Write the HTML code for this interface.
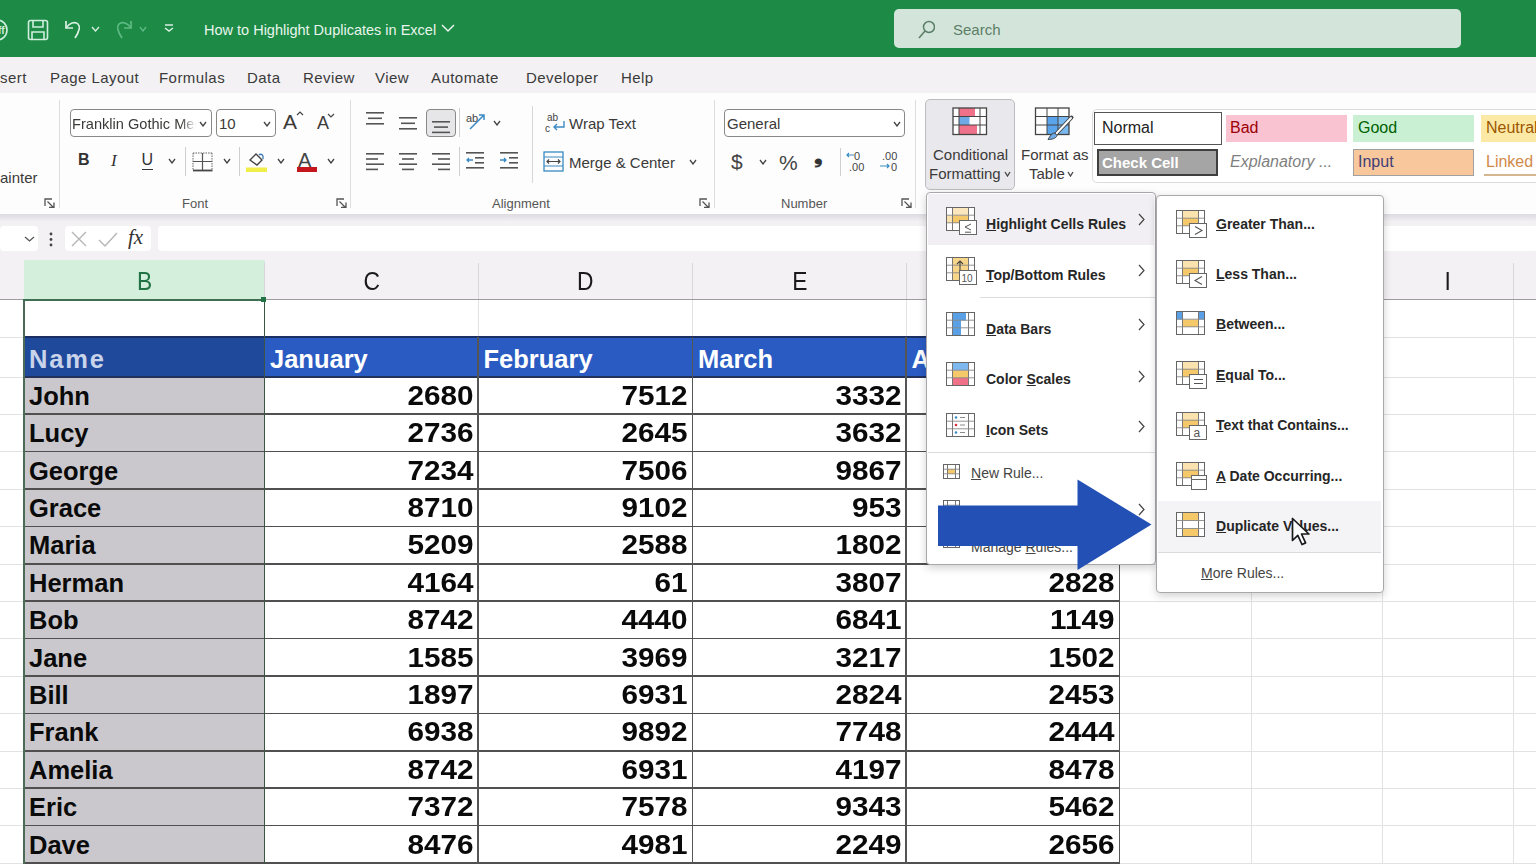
<!DOCTYPE html><html><head><meta charset="utf-8"><style>
*{margin:0;padding:0;box-sizing:border-box}
html,body{width:1536px;height:864px;overflow:hidden;background:#fff;font-family:"Liberation Sans",sans-serif}
.abs{position:absolute}
.t{position:absolute;white-space:nowrap;line-height:1}
</style></head><body>
<div class="abs" style="left:0;top:0;width:1536px;height:57px;background:#1d8b46"></div>
<div class="abs" style="left:894px;top:9px;width:567px;height:39px;background:#d3e5da;border-radius:5px"></div>
<div class="t" style="left:953px;top:22px;font-size:15px;color:#5c7e67">Search</div>
<div class="t" style="left:204px;top:23px;font-size:14.5px;color:#e8f5ec">How to Highlight Duplicates in Excel</div>
<div class="abs" style="left:0;top:57px;width:1536px;height:36px;background:#f3f1f4"></div>
<div class="t" style="left:0px;top:70px;font-size:15px;color:#3a3a3a;letter-spacing:0.45px">sert</div>
<div class="t" style="left:50px;top:70px;font-size:15px;color:#3a3a3a;letter-spacing:0.45px">Page Layout</div>
<div class="t" style="left:159px;top:70px;font-size:15px;color:#3a3a3a;letter-spacing:0.45px">Formulas</div>
<div class="t" style="left:247px;top:70px;font-size:15px;color:#3a3a3a;letter-spacing:0.45px">Data</div>
<div class="t" style="left:303px;top:70px;font-size:15px;color:#3a3a3a;letter-spacing:0.45px">Review</div>
<div class="t" style="left:375px;top:70px;font-size:15px;color:#3a3a3a;letter-spacing:0.45px">View</div>
<div class="t" style="left:431px;top:70px;font-size:15px;color:#3a3a3a;letter-spacing:0.45px">Automate</div>
<div class="t" style="left:526px;top:70px;font-size:15px;color:#3a3a3a;letter-spacing:0.45px">Developer</div>
<div class="t" style="left:621px;top:70px;font-size:15px;color:#3a3a3a;letter-spacing:0.45px">Help</div>
<div class="abs" style="left:0;top:93px;width:1536px;height:122px;background:#fdfdfd"></div>
<div class="abs" style="left:0;top:214px;width:1536px;height:8px;background:linear-gradient(#dddbe0,#f3f1f4)"></div>
<div class="t" style="left:0px;top:170px;font-size:15px;color:#3b3a39;">ainter</div>
<svg class="abs" style="left:44px;top:198px;" width="11" height="10" viewBox="0 0 11 10"><path d="M1 8V1h7M3.5 3.5l6 6M10 4.5v5H5" stroke="#555" stroke-width="1.3" fill="none"/></svg>
<div class="abs" style="left:58.5px;top:100px;width:1px;height:108px;background:#dedcdf"></div>
<div class="abs" style="left:69.5px;top:109px;width:142.5px;height:28px;border:1px solid #8a8886;border-radius:4px;background:#fff"></div>
<div class="t" style="left:72px;top:116.5px;width:124px;overflow:hidden;font-size:14.6px;color:#3b3a39;-webkit-mask-image:linear-gradient(90deg,#000 88%,transparent)">Franklin Gothic Medium</div>
<svg class="abs" style="left:199px;top:121px;" width="8" height="6" viewBox="0 0 8 6"><path d="M1 1l3.0 4l3.0 -4" stroke="#444" stroke-width="1.3" fill="none"/></svg>
<div class="abs" style="left:215.5px;top:109px;width:60px;height:28px;border:1px solid #8a8886;border-radius:4px;background:#fff"></div>
<div class="t" style="left:219px;top:116px;font-size:15px;color:#3b3a39;">10</div>
<svg class="abs" style="left:263px;top:121px;" width="8" height="6" viewBox="0 0 8 6"><path d="M1 1l3.0 4l3.0 -4" stroke="#444" stroke-width="1.3" fill="none"/></svg>
<div class="t" style="left:283px;top:111px;font-size:21px;color:#3b3a39;">A</div>
<svg class="abs" style="left:296px;top:110px;" width="8" height="6" viewBox="0 0 8 6"><path d="M1 5l3-3 3 3" stroke="#444" stroke-width="1.2" fill="none"/></svg>
<div class="t" style="left:317px;top:114px;font-size:18px;color:#3b3a39;">A</div>
<svg class="abs" style="left:327px;top:113px;" width="8" height="6" viewBox="0 0 8 6"><path d="M1 1l3 3 3-3" stroke="#444" stroke-width="1.2" fill="none"/></svg>
<div class="t" style="left:78px;top:152px;font-size:16px;color:#333;font-weight:bold">B</div>
<div class="t" style="left:111px;top:152px;font-size:17px;color:#333;font-style:italic;font-family:'Liberation Serif'">I</div>
<div class="t" style="left:141.5px;top:152px;font-size:16px;color:#333;">U</div>
<div class="abs" style="left:142px;top:168.5px;width:11px;height:1.2px;background:#333"></div>
<svg class="abs" style="left:168px;top:158px;" width="8" height="6" viewBox="0 0 8 6"><path d="M1 1l3.0 4l3.0 -4" stroke="#444" stroke-width="1.3" fill="none"/></svg>
<div class="abs" style="left:185px;top:147px;width:1px;height:29px;background:#d0ced2"></div>
<svg class="abs" style="left:192px;top:152px;" width="21" height="20" viewBox="0 0 21 20"><path d="M1 1h19M1 1v17M20 1v17" stroke="#666" stroke-width="1" fill="none" stroke-dasharray="1.5 1"/><path d="M10.5 1v17M1 9.5h19" stroke="#555" stroke-width="1.2"/><path d="M1 18.5h19.5" stroke="#444" stroke-width="1.8"/></svg>
<svg class="abs" style="left:222.5px;top:158px;" width="8" height="6" viewBox="0 0 8 6"><path d="M1 1l3.0 4l3.0 -4" stroke="#444" stroke-width="1.3" fill="none"/></svg>
<div class="abs" style="left:239px;top:147px;width:1px;height:29px;background:#d0ced2"></div>
<svg class="abs" style="left:245px;top:149px;" width="24" height="24" viewBox="0 0 24 24"><path d="M5 11l6-6 6 6-5 5z" stroke="#444" stroke-width="1.4" fill="none"/><path d="M14 6c2-2 5 0 4 4" stroke="#3a7ab8" stroke-width="1.4" fill="none"/><rect x="1" y="18.5" width="21" height="4.5" fill="#f1ee4a"/></svg>
<svg class="abs" style="left:276.5px;top:158px;" width="8" height="6" viewBox="0 0 8 6"><path d="M1 1l3.0 4l3.0 -4" stroke="#444" stroke-width="1.3" fill="none"/></svg>
<div class="t" style="left:298px;top:150px;font-size:20px;color:#444;">A</div>
<div class="abs" style="left:296.5px;top:166.5px;width:20px;height:5px;background:#c4161c"></div>
<svg class="abs" style="left:327px;top:158px;" width="8" height="6" viewBox="0 0 8 6"><path d="M1 1l3.0 4l3.0 -4" stroke="#444" stroke-width="1.3" fill="none"/></svg>
<div class="t" style="left:182px;top:197px;font-size:13px;color:#555;">Font</div>
<svg class="abs" style="left:335.5px;top:198px;" width="11" height="10" viewBox="0 0 11 10"><path d="M1 8V1h7M3.5 3.5l6 6M10 4.5v5H5" stroke="#555" stroke-width="1.3" fill="none"/></svg>
<div class="abs" style="left:349.5px;top:100px;width:1px;height:108px;background:#dedcdf"></div>
<svg class="abs" style="left:366px;top:112px;" width="20" height="18.5" viewBox="0 0 20 18.5"><rect x="0" y="0.0" width="18" height="1.6" fill="#555"/><rect x="2" y="5.5" width="14" height="1.6" fill="#555"/><rect x="0" y="11.0" width="18" height="1.6" fill="#555"/></svg>
<svg class="abs" style="left:399px;top:117px;" width="20" height="18.5" viewBox="0 0 20 18.5"><rect x="0" y="0.0" width="18" height="1.6" fill="#555"/><rect x="2" y="5.5" width="14" height="1.6" fill="#555"/><rect x="0" y="11.0" width="18" height="1.6" fill="#555"/></svg>
<div class="abs" style="left:425.5px;top:108.5px;width:30.5px;height:28.5px;border:1px solid #8a8886;border-radius:4px;background:#e6e5e8"></div>
<svg class="abs" style="left:432px;top:121px;" width="20" height="17.9" viewBox="0 0 20 17.9"><rect x="0" y="0.0" width="18" height="1.6" fill="#555"/><rect x="2" y="5.3" width="14" height="1.6" fill="#555"/><rect x="0" y="10.6" width="18" height="1.6" fill="#555"/></svg>
<div class="abs" style="left:459px;top:108px;width:1px;height:29px;background:#d0ced2"></div>
<svg class="abs" style="left:465px;top:110px;" width="24" height="22" viewBox="0 0 24 22"><text x="1" y="12" font-size="11" fill="#444" font-family="Liberation Sans">ab</text><path d="M5 19L19 5M14 5h5v5" stroke="#3a8bc4" stroke-width="1.5" fill="none"/></svg>
<svg class="abs" style="left:493px;top:120px;" width="8" height="6" viewBox="0 0 8 6"><path d="M1 1l3.0 4l3.0 -4" stroke="#444" stroke-width="1.3" fill="none"/></svg>
<div class="abs" style="left:532px;top:106px;width:1px;height:77px;background:#d8d6da"></div>
<svg class="abs" style="left:545px;top:112px;" width="22" height="22" viewBox="0 0 22 22"><text x="2" y="9" font-size="10" fill="#444" font-family="Liberation Sans">ab</text><text x="0" y="20" font-size="10" fill="#444" font-family="Liberation Sans">c</text><path d="M19 9v6h-9M12 12l-3 3 3 3" stroke="#3a8bc4" stroke-width="1.4" fill="none"/></svg>
<div class="t" style="left:569px;top:116px;font-size:15px;color:#3b3a39;">Wrap Text</div>
<svg class="abs" style="left:366px;top:153px;" width="20" height="22.8" viewBox="0 0 20 22.8"><rect x="0" y="0.0" width="18" height="1.6" fill="#555"/><rect x="0" y="5.2" width="12" height="1.6" fill="#555"/><rect x="0" y="10.4" width="18" height="1.6" fill="#555"/><rect x="0" y="15.600000000000001" width="12" height="1.6" fill="#555"/></svg>
<svg class="abs" style="left:399px;top:153px;" width="20" height="22.8" viewBox="0 0 20 22.8"><rect x="0" y="0.0" width="18" height="1.6" fill="#555"/><rect x="3" y="5.2" width="12" height="1.6" fill="#555"/><rect x="0" y="10.4" width="18" height="1.6" fill="#555"/><rect x="3" y="15.600000000000001" width="12" height="1.6" fill="#555"/></svg>
<svg class="abs" style="left:431.5px;top:153px;" width="20" height="22.8" viewBox="0 0 20 22.8"><rect x="0" y="0.0" width="18" height="1.6" fill="#555"/><rect x="6" y="5.2" width="12" height="1.6" fill="#555"/><rect x="0" y="10.4" width="18" height="1.6" fill="#555"/><rect x="6" y="15.600000000000001" width="12" height="1.6" fill="#555"/></svg>
<div class="abs" style="left:459px;top:147px;width:1px;height:29px;background:#d0ced2"></div>
<svg class="abs" style="left:466px;top:152px;" width="20" height="18" viewBox="0 0 20 18"><rect x="0" y="0" width="18" height="1.6" fill="#555"/><rect x="9" y="5" width="9" height="1.6" fill="#555"/><rect x="9" y="10" width="9" height="1.6" fill="#555"/><rect x="0" y="15" width="18" height="1.6" fill="#555"/><path d="M7 8H1M3 6l-2 2 2 2" stroke="#3a8bc4" stroke-width="1.3" fill="none"/></svg>
<svg class="abs" style="left:499.5px;top:152px;" width="20" height="18" viewBox="0 0 20 18"><rect x="0" y="0" width="18" height="1.6" fill="#555"/><rect x="9" y="5" width="9" height="1.6" fill="#555"/><rect x="9" y="10" width="9" height="1.6" fill="#555"/><rect x="0" y="15" width="18" height="1.6" fill="#555"/><path d="M0 8h6M4 6l2 2-2 2" stroke="#3a8bc4" stroke-width="1.3" fill="none"/></svg>
<svg class="abs" style="left:543px;top:151px;" width="21" height="21" viewBox="0 0 21 21"><rect x="1" y="1" width="19" height="19" fill="none" stroke="#3a8bc4" stroke-width="1.3"/><path d="M1 6h19M1 15h19" stroke="#3a8bc4" stroke-width="1"/><path d="M4 10.5h13M6 8.5l-2 2 2 2M15 8.5l2 2-2 2" stroke="#444" stroke-width="1.2" fill="none"/></svg>
<div class="t" style="left:569px;top:155px;font-size:15px;color:#3b3a39;">Merge &amp; Center</div>
<svg class="abs" style="left:689px;top:159px;" width="8" height="6" viewBox="0 0 8 6"><path d="M1 1l3.0 4l3.0 -4" stroke="#444" stroke-width="1.3" fill="none"/></svg>
<div class="t" style="left:492px;top:197px;font-size:13px;color:#555;">Alignment</div>
<svg class="abs" style="left:699px;top:198px;" width="11" height="10" viewBox="0 0 11 10"><path d="M1 8V1h7M3.5 3.5l6 6M10 4.5v5H5" stroke="#555" stroke-width="1.3" fill="none"/></svg>
<div class="abs" style="left:713.5px;top:100px;width:1px;height:108px;background:#dedcdf"></div>
<div class="abs" style="left:724px;top:108.5px;width:181px;height:28.5px;border:1px solid #8a8886;border-radius:4px;background:#fff"></div>
<div class="t" style="left:727px;top:116px;font-size:15px;color:#3b3a39;">General</div>
<svg class="abs" style="left:893px;top:121px;" width="8" height="6" viewBox="0 0 8 6"><path d="M1 1l3.0 4l3.0 -4" stroke="#444" stroke-width="1.3" fill="none"/></svg>
<div class="t" style="left:731px;top:151px;font-size:21px;color:#444;">$</div>
<svg class="abs" style="left:758.5px;top:159px;" width="8" height="6" viewBox="0 0 8 6"><path d="M1 1l3.0 4l3.0 -4" stroke="#444" stroke-width="1.3" fill="none"/></svg>
<div class="t" style="left:779px;top:152px;font-size:21px;color:#444;">%</div>
<div class="t" style="left:814px;top:145px;font-size:22px;color:#333;font-weight:bold">&#x275F;</div>
<div class="abs" style="left:840px;top:148px;width:1px;height:28px;background:#d0ced2"></div>
<svg class="abs" style="left:846px;top:150px;" width="22" height="24" viewBox="0 0 22 24"><text x="8" y="10" font-size="11" fill="#444" font-family="Liberation Sans">0</text><text x="3" y="21" font-size="11" fill="#444" font-family="Liberation Sans">.00</text><path d="M8 5H1M3 3l-2 2 2 2" stroke="#3a8bc4" stroke-width="1.2" fill="none"/></svg>
<svg class="abs" style="left:879px;top:150px;" width="22" height="24" viewBox="0 0 22 24"><text x="3" y="10" font-size="11" fill="#444" font-family="Liberation Sans">.00</text><text x="12" y="21" font-size="11" fill="#444" font-family="Liberation Sans">0</text><path d="M1 16h9M8 14l2 2-2 2" stroke="#3a8bc4" stroke-width="1.2" fill="none"/></svg>
<div class="t" style="left:781px;top:197px;font-size:13px;color:#555;">Number</div>
<svg class="abs" style="left:900.5px;top:198px;" width="11" height="10" viewBox="0 0 11 10"><path d="M1 8V1h7M3.5 3.5l6 6M10 4.5v5H5" stroke="#555" stroke-width="1.3" fill="none"/></svg>
<div class="abs" style="left:915px;top:100px;width:1px;height:108px;background:#dedcdf"></div>
<div class="abs" style="left:925px;top:99px;width:90px;height:91px;border:1px solid #bdbbbf;border-radius:5px;background:#e9e8ec"></div>
<svg class="abs" style="left:952px;top:107px;" width="37" height="30" viewBox="0 0 37 30"><rect x="1" y="1" width="33.5" height="26.5" fill="#fff"/><rect x="7" y="1" width="16" height="8.5" fill="#f0728a"/><rect x="7" y="9.5" width="10.5" height="8.5" fill="#6ea9e8"/><rect x="7" y="18" width="18" height="9" fill="#f0728a"/><path d="M7 1v26.5M28 1v26.5M1 9.5h33.5M1 18h33.5" stroke="#444" stroke-width="1"/><rect x="1" y="1" width="33.5" height="26.5" fill="none" stroke="#444" stroke-width="1.3"/></svg>
<div class="t" style="left:933px;top:147px;font-size:15px;color:#3b3a39;">Conditional</div>
<div class="t" style="left:929px;top:166px;font-size:15px;color:#3b3a39;">Formatting</div>
<svg class="abs" style="left:1004px;top:171px;" width="7" height="6" viewBox="0 0 7 6"><path d="M1 1l2.5 4l2.5 -4" stroke="#444" stroke-width="1.3" fill="none"/></svg>
<svg class="abs" style="left:1034px;top:107px;" width="42" height="34" viewBox="0 0 42 34"><rect x="1.5" y="1" width="33.5" height="26.5" fill="#fff"/><rect x="13" y="9.5" width="22" height="18" fill="#7ab8f0"/><rect x="13" y="9.5" width="11" height="18" fill="#5aa4ec"/><path d="M13 1v26.5M24 1v26.5M1.5 9.5h33.5M1.5 18h33.5" stroke="#444" stroke-width="1"/><rect x="1.5" y="1" width="33.5" height="26.5" fill="none" stroke="#444" stroke-width="1.3"/><path d="M37.5 10.5L22 27" stroke="#444" stroke-width="4" stroke-linecap="round"/><path d="M37 11L21.5 27.5" stroke="#fff" stroke-width="2" stroke-linecap="round"/><path d="M21 26c-3 0-5 3-7 6.5 4 0 8-1 9-4z" fill="#6ea9e8" stroke="#444" stroke-width="1"/></svg>
<div class="t" style="left:1021px;top:147px;font-size:15px;color:#3b3a39;">Format as</div>
<div class="t" style="left:1029px;top:166px;font-size:15px;color:#3b3a39;">Table</div>
<svg class="abs" style="left:1067px;top:171px;" width="7" height="6" viewBox="0 0 7 6"><path d="M1 1l2.5 4l2.5 -4" stroke="#444" stroke-width="1.3" fill="none"/></svg>
<div class="abs" style="left:1091.5px;top:109px;width:460px;height:74px;border:1px solid #dcdadd;border-radius:5px;background:#fff"></div>
<div class="abs" style="left:1094px;top:112px;width:128px;height:33px;border:1.5px solid #555;background:#fff"></div>
<div class="t" style="left:1102px;top:120px;font-size:16px;color:#222;">Normal</div>
<div class="abs" style="left:1225.5px;top:115px;width:121px;height:27px;background:#f9c3d2"></div>
<div class="t" style="left:1230px;top:120px;font-size:16px;color:#9c0006;">Bad</div>
<div class="abs" style="left:1353px;top:115px;width:121px;height:27px;background:#c9f0d3"></div>
<div class="t" style="left:1358px;top:120px;font-size:16px;color:#006100;">Good</div>
<div class="abs" style="left:1481px;top:115px;width:80px;height:27px;background:#fde9a6"></div>
<div class="t" style="left:1486px;top:120px;font-size:16px;color:#9c5700;">Neutral</div>
<div class="abs" style="left:1097px;top:149px;width:121px;height:27px;background:#a5a5a5;border:2.5px double #3f3f3f;outline:1px solid #3f3f3f;outline-offset:-1px"></div>
<div class="t" style="left:1102px;top:154.5px;font-size:15px;color:#fff;font-weight:bold">Check Cell</div>
<div class="t" style="left:1230px;top:154px;font-size:16px;color:#7f7f7f;font-style:italic">Explanatory ...</div>
<div class="abs" style="left:1353px;top:149px;width:121px;height:27px;background:#f8c79c;border:1px solid #a0a0a0"></div>
<div class="t" style="left:1358px;top:154px;font-size:16px;color:#3f3f76;">Input</div>
<div class="t" style="left:1486px;top:154px;font-size:16px;color:#d18a48;">Linked</div>
<div class="abs" style="left:1484px;top:174px;width:60px;height:2px;background:#d6b690"></div>
<div class="abs" style="left:0;top:222px;width:1536px;height:38px;background:#f3f1f4"></div>
<div class="abs" style="left:0;top:226px;width:38px;height:25px;background:#fff;border-radius:4px"></div>
<div class="abs" style="left:65px;top:226px;width:86px;height:25px;background:#fff;border-radius:4px"></div>
<div class="abs" style="left:158px;top:226px;width:1380px;height:25px;background:#fff;border-radius:4px"></div>
<div class="abs" style="left:0;top:257px;width:1536px;height:42.5px;background:#f3f1f4"></div>
<div class="abs" style="left:23.5px;top:259.5px;width:241px;height:40.0px;background:#d4f0dc"></div>
<div class="t" style="left:23.5px;width:241.0px;text-align:center;top:267.5px;font-size:26.5px;color:#217346;transform:scaleX(0.86)">B</div>
<div class="abs" style="left:264.0px;top:263px;width:1px;height:36.5px;background:#d8d6da"></div>
<div class="t" style="left:264.5px;width:213.5px;text-align:center;top:267.5px;font-size:26.5px;color:#1a1a1a;transform:scaleX(0.86)">C</div>
<div class="abs" style="left:477.5px;top:263px;width:1px;height:36.5px;background:#d8d6da"></div>
<div class="t" style="left:478px;width:214.5px;text-align:center;top:267.5px;font-size:26.5px;color:#1a1a1a;transform:scaleX(0.86)">D</div>
<div class="abs" style="left:692.0px;top:263px;width:1px;height:36.5px;background:#d8d6da"></div>
<div class="t" style="left:692.5px;width:213.5px;text-align:center;top:267.5px;font-size:26.5px;color:#1a1a1a;transform:scaleX(0.86)">E</div>
<div class="abs" style="left:905.5px;top:263px;width:1px;height:36.5px;background:#d8d6da"></div>
<div class="t" style="left:906px;width:213.5px;text-align:center;top:267.5px;font-size:26.5px;color:#1a1a1a;transform:scaleX(0.86)">F</div>
<div class="abs" style="left:1119.0px;top:263px;width:1px;height:36.5px;background:#d8d6da"></div>
<div class="t" style="left:1119.5px;width:131.79999999999995px;text-align:center;top:267.5px;font-size:26.5px;color:#1a1a1a;transform:scaleX(0.86)">G</div>
<div class="abs" style="left:1250.8px;top:263px;width:1px;height:36.5px;background:#d8d6da"></div>
<div class="t" style="left:1251.3px;width:131.10000000000014px;text-align:center;top:267.5px;font-size:26.5px;color:#1a1a1a;transform:scaleX(0.86)">H</div>
<div class="abs" style="left:1381.9px;top:263px;width:1px;height:36.5px;background:#d8d6da"></div>
<div class="t" style="left:1382.4px;width:131.19999999999982px;text-align:center;top:267.5px;font-size:26.5px;color:#1a1a1a;transform:scaleX(0.86)">I</div>
<div class="abs" style="left:1513.1px;top:263px;width:1px;height:36.5px;background:#d8d6da"></div>
<div class="t" style="left:1513.6px;width:131.4000000000001px;text-align:center;top:267.5px;font-size:26.5px;color:#1a1a1a;transform:scaleX(0.86)">J</div>
<div class="abs" style="left:1644.5px;top:263px;width:1px;height:36.5px;background:#d8d6da"></div>
<div class="abs" style="left:0;top:298.5px;width:1536px;height:1.5px;background:#9d9b9f"></div>
<div class="abs" style="left:0;top:336.5px;width:1536px;height:1px;background:#e2e2e2"></div>
<div class="abs" style="left:0;top:376.5px;width:1536px;height:1px;background:#e2e2e2"></div>
<div class="abs" style="left:0;top:413.9px;width:1536px;height:1px;background:#e2e2e2"></div>
<div class="abs" style="left:0;top:451.29999999999995px;width:1536px;height:1px;background:#e2e2e2"></div>
<div class="abs" style="left:0;top:488.69999999999993px;width:1536px;height:1px;background:#e2e2e2"></div>
<div class="abs" style="left:0;top:526.0999999999999px;width:1536px;height:1px;background:#e2e2e2"></div>
<div class="abs" style="left:0;top:563.4999999999999px;width:1536px;height:1px;background:#e2e2e2"></div>
<div class="abs" style="left:0;top:600.8999999999999px;width:1536px;height:1px;background:#e2e2e2"></div>
<div class="abs" style="left:0;top:638.2999999999998px;width:1536px;height:1px;background:#e2e2e2"></div>
<div class="abs" style="left:0;top:675.6999999999998px;width:1536px;height:1px;background:#e2e2e2"></div>
<div class="abs" style="left:0;top:713.0999999999998px;width:1536px;height:1px;background:#e2e2e2"></div>
<div class="abs" style="left:0;top:750.4999999999998px;width:1536px;height:1px;background:#e2e2e2"></div>
<div class="abs" style="left:0;top:787.8999999999997px;width:1536px;height:1px;background:#e2e2e2"></div>
<div class="abs" style="left:0;top:825.2999999999997px;width:1536px;height:1px;background:#e2e2e2"></div>
<div class="abs" style="left:0;top:862.6999999999997px;width:1536px;height:1px;background:#e2e2e2"></div>
<div class="abs" style="left:23.0px;top:299.5px;width:1px;height:564.5px;background:#e2e2e2"></div>
<div class="abs" style="left:264.0px;top:299.5px;width:1px;height:564.5px;background:#e2e2e2"></div>
<div class="abs" style="left:477.5px;top:299.5px;width:1px;height:564.5px;background:#e2e2e2"></div>
<div class="abs" style="left:692.0px;top:299.5px;width:1px;height:564.5px;background:#e2e2e2"></div>
<div class="abs" style="left:905.5px;top:299.5px;width:1px;height:564.5px;background:#e2e2e2"></div>
<div class="abs" style="left:1119.0px;top:299.5px;width:1px;height:564.5px;background:#e2e2e2"></div>
<div class="abs" style="left:1250.8px;top:299.5px;width:1px;height:564.5px;background:#e2e2e2"></div>
<div class="abs" style="left:1381.9px;top:299.5px;width:1px;height:564.5px;background:#e2e2e2"></div>
<div class="abs" style="left:1513.1px;top:299.5px;width:1px;height:564.5px;background:#e2e2e2"></div>
<div class="abs" style="left:1644.5px;top:299.5px;width:1px;height:564.5px;background:#e2e2e2"></div>
<div class="abs" style="left:23.5px;top:337px;width:241px;height:40px;background:#1f4a9c"></div>
<div class="abs" style="left:264.5px;top:337px;width:855.0px;height:40px;background:#2a5bc2"></div>
<div class="t" style="left:29.0px;top:346.5px;font-size:25.5px;font-weight:bold;color:#c9d3ea;letter-spacing:1.8px;">Name</div>
<div class="t" style="left:270.0px;top:346.5px;font-size:25.5px;font-weight:bold;color:#ffffff;">January</div>
<div class="t" style="left:483.5px;top:346.5px;font-size:25.5px;font-weight:bold;color:#ffffff;">February</div>
<div class="t" style="left:698.0px;top:346.5px;font-size:25.5px;font-weight:bold;color:#ffffff;">March</div>
<div class="t" style="left:911.5px;top:346.5px;font-size:25.5px;font-weight:bold;color:#ffffff;">April</div>
<div class="abs" style="left:23.5px;top:377px;width:241px;height:37.39999999999998px;background:#cac8cc"></div>
<div class="abs" style="left:264.5px;top:377px;width:855px;height:37.39999999999998px;background:#fff"></div>
<div class="t" style="left:29px;top:383.8px;font-size:25.5px;font-weight:bold;color:#0a0a0a">John</div>
<div class="t" style="left:264.5px;width:208.5px;text-align:right;top:382.7px;font-size:27px;font-weight:bold;color:#0a0a0a;transform:scaleX(1.1);transform-origin:right">2680</div>
<div class="t" style="left:478px;width:209.5px;text-align:right;top:382.7px;font-size:27px;font-weight:bold;color:#0a0a0a;transform:scaleX(1.1);transform-origin:right">7512</div>
<div class="t" style="left:692.5px;width:208.5px;text-align:right;top:382.7px;font-size:27px;font-weight:bold;color:#0a0a0a;transform:scaleX(1.1);transform-origin:right">3332</div>
<div class="abs" style="left:23.5px;top:414.4px;width:241px;height:37.39999999999998px;background:#cac8cc"></div>
<div class="abs" style="left:264.5px;top:414.4px;width:855px;height:37.39999999999998px;background:#fff"></div>
<div class="t" style="left:29px;top:421.2px;font-size:25.5px;font-weight:bold;color:#0a0a0a">Lucy</div>
<div class="t" style="left:264.5px;width:208.5px;text-align:right;top:420.09999999999997px;font-size:27px;font-weight:bold;color:#0a0a0a;transform:scaleX(1.1);transform-origin:right">2736</div>
<div class="t" style="left:478px;width:209.5px;text-align:right;top:420.09999999999997px;font-size:27px;font-weight:bold;color:#0a0a0a;transform:scaleX(1.1);transform-origin:right">2645</div>
<div class="t" style="left:692.5px;width:208.5px;text-align:right;top:420.09999999999997px;font-size:27px;font-weight:bold;color:#0a0a0a;transform:scaleX(1.1);transform-origin:right">3632</div>
<div class="abs" style="left:23.5px;top:451.79999999999995px;width:241px;height:37.39999999999998px;background:#cac8cc"></div>
<div class="abs" style="left:264.5px;top:451.79999999999995px;width:855px;height:37.39999999999998px;background:#fff"></div>
<div class="t" style="left:29px;top:458.59999999999997px;font-size:25.5px;font-weight:bold;color:#0a0a0a">George</div>
<div class="t" style="left:264.5px;width:208.5px;text-align:right;top:457.49999999999994px;font-size:27px;font-weight:bold;color:#0a0a0a;transform:scaleX(1.1);transform-origin:right">7234</div>
<div class="t" style="left:478px;width:209.5px;text-align:right;top:457.49999999999994px;font-size:27px;font-weight:bold;color:#0a0a0a;transform:scaleX(1.1);transform-origin:right">7506</div>
<div class="t" style="left:692.5px;width:208.5px;text-align:right;top:457.49999999999994px;font-size:27px;font-weight:bold;color:#0a0a0a;transform:scaleX(1.1);transform-origin:right">9867</div>
<div class="abs" style="left:23.5px;top:489.19999999999993px;width:241px;height:37.39999999999998px;background:#cac8cc"></div>
<div class="abs" style="left:264.5px;top:489.19999999999993px;width:855px;height:37.39999999999998px;background:#fff"></div>
<div class="t" style="left:29px;top:495.99999999999994px;font-size:25.5px;font-weight:bold;color:#0a0a0a">Grace</div>
<div class="t" style="left:264.5px;width:208.5px;text-align:right;top:494.8999999999999px;font-size:27px;font-weight:bold;color:#0a0a0a;transform:scaleX(1.1);transform-origin:right">8710</div>
<div class="t" style="left:478px;width:209.5px;text-align:right;top:494.8999999999999px;font-size:27px;font-weight:bold;color:#0a0a0a;transform:scaleX(1.1);transform-origin:right">9102</div>
<div class="t" style="left:692.5px;width:208.5px;text-align:right;top:494.8999999999999px;font-size:27px;font-weight:bold;color:#0a0a0a;transform:scaleX(1.1);transform-origin:right">953</div>
<div class="abs" style="left:23.5px;top:526.5999999999999px;width:241px;height:37.39999999999998px;background:#cac8cc"></div>
<div class="abs" style="left:264.5px;top:526.5999999999999px;width:855px;height:37.39999999999998px;background:#fff"></div>
<div class="t" style="left:29px;top:533.3999999999999px;font-size:25.5px;font-weight:bold;color:#0a0a0a">Maria</div>
<div class="t" style="left:264.5px;width:208.5px;text-align:right;top:532.3px;font-size:27px;font-weight:bold;color:#0a0a0a;transform:scaleX(1.1);transform-origin:right">5209</div>
<div class="t" style="left:478px;width:209.5px;text-align:right;top:532.3px;font-size:27px;font-weight:bold;color:#0a0a0a;transform:scaleX(1.1);transform-origin:right">2588</div>
<div class="t" style="left:692.5px;width:208.5px;text-align:right;top:532.3px;font-size:27px;font-weight:bold;color:#0a0a0a;transform:scaleX(1.1);transform-origin:right">1802</div>
<div class="abs" style="left:23.5px;top:563.9999999999999px;width:241px;height:37.39999999999998px;background:#cac8cc"></div>
<div class="abs" style="left:264.5px;top:563.9999999999999px;width:855px;height:37.39999999999998px;background:#fff"></div>
<div class="t" style="left:29px;top:570.7999999999998px;font-size:25.5px;font-weight:bold;color:#0a0a0a">Herman</div>
<div class="t" style="left:264.5px;width:208.5px;text-align:right;top:569.6999999999999px;font-size:27px;font-weight:bold;color:#0a0a0a;transform:scaleX(1.1);transform-origin:right">4164</div>
<div class="t" style="left:478px;width:209.5px;text-align:right;top:569.6999999999999px;font-size:27px;font-weight:bold;color:#0a0a0a;transform:scaleX(1.1);transform-origin:right">61</div>
<div class="t" style="left:692.5px;width:208.5px;text-align:right;top:569.6999999999999px;font-size:27px;font-weight:bold;color:#0a0a0a;transform:scaleX(1.1);transform-origin:right">3807</div>
<div class="t" style="left:906px;width:208.5px;text-align:right;top:569.6999999999999px;font-size:27px;font-weight:bold;color:#0a0a0a;transform:scaleX(1.1);transform-origin:right">2828</div>
<div class="abs" style="left:23.5px;top:601.3999999999999px;width:241px;height:37.39999999999998px;background:#cac8cc"></div>
<div class="abs" style="left:264.5px;top:601.3999999999999px;width:855px;height:37.39999999999998px;background:#fff"></div>
<div class="t" style="left:29px;top:608.1999999999998px;font-size:25.5px;font-weight:bold;color:#0a0a0a">Bob</div>
<div class="t" style="left:264.5px;width:208.5px;text-align:right;top:607.0999999999999px;font-size:27px;font-weight:bold;color:#0a0a0a;transform:scaleX(1.1);transform-origin:right">8742</div>
<div class="t" style="left:478px;width:209.5px;text-align:right;top:607.0999999999999px;font-size:27px;font-weight:bold;color:#0a0a0a;transform:scaleX(1.1);transform-origin:right">4440</div>
<div class="t" style="left:692.5px;width:208.5px;text-align:right;top:607.0999999999999px;font-size:27px;font-weight:bold;color:#0a0a0a;transform:scaleX(1.1);transform-origin:right">6841</div>
<div class="t" style="left:906px;width:208.5px;text-align:right;top:607.0999999999999px;font-size:27px;font-weight:bold;color:#0a0a0a;transform:scaleX(1.1);transform-origin:right">1149</div>
<div class="abs" style="left:23.5px;top:638.7999999999998px;width:241px;height:37.39999999999998px;background:#cac8cc"></div>
<div class="abs" style="left:264.5px;top:638.7999999999998px;width:855px;height:37.39999999999998px;background:#fff"></div>
<div class="t" style="left:29px;top:645.5999999999998px;font-size:25.5px;font-weight:bold;color:#0a0a0a">Jane</div>
<div class="t" style="left:264.5px;width:208.5px;text-align:right;top:644.4999999999999px;font-size:27px;font-weight:bold;color:#0a0a0a;transform:scaleX(1.1);transform-origin:right">1585</div>
<div class="t" style="left:478px;width:209.5px;text-align:right;top:644.4999999999999px;font-size:27px;font-weight:bold;color:#0a0a0a;transform:scaleX(1.1);transform-origin:right">3969</div>
<div class="t" style="left:692.5px;width:208.5px;text-align:right;top:644.4999999999999px;font-size:27px;font-weight:bold;color:#0a0a0a;transform:scaleX(1.1);transform-origin:right">3217</div>
<div class="t" style="left:906px;width:208.5px;text-align:right;top:644.4999999999999px;font-size:27px;font-weight:bold;color:#0a0a0a;transform:scaleX(1.1);transform-origin:right">1502</div>
<div class="abs" style="left:23.5px;top:676.1999999999998px;width:241px;height:37.39999999999998px;background:#cac8cc"></div>
<div class="abs" style="left:264.5px;top:676.1999999999998px;width:855px;height:37.39999999999998px;background:#fff"></div>
<div class="t" style="left:29px;top:682.9999999999998px;font-size:25.5px;font-weight:bold;color:#0a0a0a">Bill</div>
<div class="t" style="left:264.5px;width:208.5px;text-align:right;top:681.8999999999999px;font-size:27px;font-weight:bold;color:#0a0a0a;transform:scaleX(1.1);transform-origin:right">1897</div>
<div class="t" style="left:478px;width:209.5px;text-align:right;top:681.8999999999999px;font-size:27px;font-weight:bold;color:#0a0a0a;transform:scaleX(1.1);transform-origin:right">6931</div>
<div class="t" style="left:692.5px;width:208.5px;text-align:right;top:681.8999999999999px;font-size:27px;font-weight:bold;color:#0a0a0a;transform:scaleX(1.1);transform-origin:right">2824</div>
<div class="t" style="left:906px;width:208.5px;text-align:right;top:681.8999999999999px;font-size:27px;font-weight:bold;color:#0a0a0a;transform:scaleX(1.1);transform-origin:right">2453</div>
<div class="abs" style="left:23.5px;top:713.5999999999998px;width:241px;height:37.39999999999998px;background:#cac8cc"></div>
<div class="abs" style="left:264.5px;top:713.5999999999998px;width:855px;height:37.39999999999998px;background:#fff"></div>
<div class="t" style="left:29px;top:720.3999999999997px;font-size:25.5px;font-weight:bold;color:#0a0a0a">Frank</div>
<div class="t" style="left:264.5px;width:208.5px;text-align:right;top:719.2999999999998px;font-size:27px;font-weight:bold;color:#0a0a0a;transform:scaleX(1.1);transform-origin:right">6938</div>
<div class="t" style="left:478px;width:209.5px;text-align:right;top:719.2999999999998px;font-size:27px;font-weight:bold;color:#0a0a0a;transform:scaleX(1.1);transform-origin:right">9892</div>
<div class="t" style="left:692.5px;width:208.5px;text-align:right;top:719.2999999999998px;font-size:27px;font-weight:bold;color:#0a0a0a;transform:scaleX(1.1);transform-origin:right">7748</div>
<div class="t" style="left:906px;width:208.5px;text-align:right;top:719.2999999999998px;font-size:27px;font-weight:bold;color:#0a0a0a;transform:scaleX(1.1);transform-origin:right">2444</div>
<div class="abs" style="left:23.5px;top:750.9999999999998px;width:241px;height:37.39999999999998px;background:#cac8cc"></div>
<div class="abs" style="left:264.5px;top:750.9999999999998px;width:855px;height:37.39999999999998px;background:#fff"></div>
<div class="t" style="left:29px;top:757.7999999999997px;font-size:25.5px;font-weight:bold;color:#0a0a0a">Amelia</div>
<div class="t" style="left:264.5px;width:208.5px;text-align:right;top:756.6999999999998px;font-size:27px;font-weight:bold;color:#0a0a0a;transform:scaleX(1.1);transform-origin:right">8742</div>
<div class="t" style="left:478px;width:209.5px;text-align:right;top:756.6999999999998px;font-size:27px;font-weight:bold;color:#0a0a0a;transform:scaleX(1.1);transform-origin:right">6931</div>
<div class="t" style="left:692.5px;width:208.5px;text-align:right;top:756.6999999999998px;font-size:27px;font-weight:bold;color:#0a0a0a;transform:scaleX(1.1);transform-origin:right">4197</div>
<div class="t" style="left:906px;width:208.5px;text-align:right;top:756.6999999999998px;font-size:27px;font-weight:bold;color:#0a0a0a;transform:scaleX(1.1);transform-origin:right">8478</div>
<div class="abs" style="left:23.5px;top:788.3999999999997px;width:241px;height:37.39999999999998px;background:#cac8cc"></div>
<div class="abs" style="left:264.5px;top:788.3999999999997px;width:855px;height:37.39999999999998px;background:#fff"></div>
<div class="t" style="left:29px;top:795.1999999999997px;font-size:25.5px;font-weight:bold;color:#0a0a0a">Eric</div>
<div class="t" style="left:264.5px;width:208.5px;text-align:right;top:794.0999999999998px;font-size:27px;font-weight:bold;color:#0a0a0a;transform:scaleX(1.1);transform-origin:right">7372</div>
<div class="t" style="left:478px;width:209.5px;text-align:right;top:794.0999999999998px;font-size:27px;font-weight:bold;color:#0a0a0a;transform:scaleX(1.1);transform-origin:right">7578</div>
<div class="t" style="left:692.5px;width:208.5px;text-align:right;top:794.0999999999998px;font-size:27px;font-weight:bold;color:#0a0a0a;transform:scaleX(1.1);transform-origin:right">9343</div>
<div class="t" style="left:906px;width:208.5px;text-align:right;top:794.0999999999998px;font-size:27px;font-weight:bold;color:#0a0a0a;transform:scaleX(1.1);transform-origin:right">5462</div>
<div class="abs" style="left:23.5px;top:825.7999999999997px;width:241px;height:37.39999999999998px;background:#cac8cc"></div>
<div class="abs" style="left:264.5px;top:825.7999999999997px;width:855px;height:37.39999999999998px;background:#fff"></div>
<div class="t" style="left:29px;top:832.5999999999997px;font-size:25.5px;font-weight:bold;color:#0a0a0a">Dave</div>
<div class="t" style="left:264.5px;width:208.5px;text-align:right;top:831.4999999999998px;font-size:27px;font-weight:bold;color:#0a0a0a;transform:scaleX(1.1);transform-origin:right">8476</div>
<div class="t" style="left:478px;width:209.5px;text-align:right;top:831.4999999999998px;font-size:27px;font-weight:bold;color:#0a0a0a;transform:scaleX(1.1);transform-origin:right">4981</div>
<div class="t" style="left:692.5px;width:208.5px;text-align:right;top:831.4999999999998px;font-size:27px;font-weight:bold;color:#0a0a0a;transform:scaleX(1.1);transform-origin:right">2249</div>
<div class="t" style="left:906px;width:208.5px;text-align:right;top:831.4999999999998px;font-size:27px;font-weight:bold;color:#0a0a0a;transform:scaleX(1.1);transform-origin:right">2656</div>
<div class="abs" style="left:23.5px;top:336.2px;width:1096px;height:1.5px;background:#1b2f62"></div>
<div class="abs" style="left:23.5px;top:376px;width:1096px;height:1.5px;background:#22325a"></div>
<div class="abs" style="left:23.5px;top:413.4px;width:1096px;height:1.5px;background:#505050"></div>
<div class="abs" style="left:23.5px;top:450.79999999999995px;width:1096px;height:1.5px;background:#505050"></div>
<div class="abs" style="left:23.5px;top:488.19999999999993px;width:1096px;height:1.5px;background:#505050"></div>
<div class="abs" style="left:23.5px;top:525.5999999999999px;width:1096px;height:1.5px;background:#505050"></div>
<div class="abs" style="left:23.5px;top:562.9999999999999px;width:1096px;height:1.5px;background:#505050"></div>
<div class="abs" style="left:23.5px;top:600.3999999999999px;width:1096px;height:1.5px;background:#505050"></div>
<div class="abs" style="left:23.5px;top:637.7999999999998px;width:1096px;height:1.5px;background:#505050"></div>
<div class="abs" style="left:23.5px;top:675.1999999999998px;width:1096px;height:1.5px;background:#505050"></div>
<div class="abs" style="left:23.5px;top:712.5999999999998px;width:1096px;height:1.5px;background:#505050"></div>
<div class="abs" style="left:23.5px;top:749.9999999999998px;width:1096px;height:1.5px;background:#505050"></div>
<div class="abs" style="left:23.5px;top:787.3999999999997px;width:1096px;height:1.5px;background:#505050"></div>
<div class="abs" style="left:23.5px;top:824.7999999999997px;width:1096px;height:1.5px;background:#505050"></div>
<div class="abs" style="left:23.5px;top:862.1999999999997px;width:1096px;height:1.5px;background:#505050"></div>
<div class="abs" style="left:263.75px;top:337px;width:1.5px;height:527px;background:#555"></div>
<div class="abs" style="left:477.25px;top:337px;width:1.5px;height:527px;background:#555"></div>
<div class="abs" style="left:691.75px;top:337px;width:1.5px;height:527px;background:#555"></div>
<div class="abs" style="left:905.25px;top:337px;width:1.5px;height:527px;background:#555"></div>
<div class="abs" style="left:1118.75px;top:337px;width:1.5px;height:527px;background:#555"></div>
<div class="abs" style="left:23px;top:299px;width:1.8px;height:565px;background:#4a6b56"></div>
<div class="abs" style="left:263.8px;top:299px;width:1.5px;height:565px;background:#3c5546"></div>
<div class="abs" style="left:23px;top:298.5px;width:242px;height:2px;background:#3f6f50"></div>
<div class="abs" style="left:261px;top:297px;width:5px;height:5px;background:#217346"></div>
<svg class="abs" style="left:0px;top:18px;" width="16" height="24" viewBox="0 0 16 24"><circle cx="-3" cy="12" r="10" stroke="#cfeedd" stroke-width="1.6" fill="none"/><text x="-2" y="16" font-size="10" fill="#cfeedd" font-family="Liberation Sans" font-weight="bold">ff</text></svg>
<svg class="abs" style="left:27px;top:19px;" width="22" height="22" viewBox="0 0 22 22"><rect x="1.5" y="1.5" width="19" height="19" rx="2" stroke="#cfeedd" stroke-width="1.6" fill="none"/><path d="M6 2v6h10V2M5 20v-7h12v7" stroke="#cfeedd" stroke-width="1.6" fill="none"/></svg>
<svg class="abs" style="left:63px;top:17px;" width="22" height="24" viewBox="0 0 22 24"><path d="M3 4v7h7" stroke="#d8f0e2" stroke-width="1.7" fill="none"/><path d="M3 11c3-5 9-7 12-4 3 3 1 8-3 14" stroke="#d8f0e2" stroke-width="1.7" fill="none"/></svg>
<svg class="abs" style="left:91px;top:26px;" width="9" height="6" viewBox="0 0 9 6"><path d="M1 1l3.5 4l3.5 -4" stroke="#d8f0e2" stroke-width="1.3" fill="none"/></svg>
<svg class="abs" style="left:112px;top:17px;" width="22" height="24" viewBox="0 0 22 24"><path d="M19 4v7h-7" stroke="#5fb985" stroke-width="1.7" fill="none"/><path d="M19 11c-3-5-9-7-12-4-3 3-1 8 3 14" stroke="#5fb985" stroke-width="1.7" fill="none"/></svg>
<svg class="abs" style="left:139px;top:26px;" width="8" height="6" viewBox="0 0 8 6"><path d="M1 1l3.0 4l3.0 -4" stroke="#5fb985" stroke-width="1.3" fill="none"/></svg>
<svg class="abs" style="left:163px;top:23px;" width="12" height="12" viewBox="0 0 12 12"><path d="M2 2h8M2 5l4 3 4-3" stroke="#d8f0e2" stroke-width="1.5" fill="none"/></svg>
<svg class="abs" style="left:441px;top:24px;" width="14" height="9" viewBox="0 0 14 9"><path d="M1 1l6 6 6-6" stroke="#e8f5ec" stroke-width="1.5" fill="none"/></svg>
<svg class="abs" style="left:917px;top:18.5px;" width="18" height="22" viewBox="0 0 18 22"><circle cx="12" cy="8" r="5.5" stroke="#5c7e67" stroke-width="1.5" fill="none"/><path d="M8 12l-6 7" stroke="#5c7e67" stroke-width="1.6"/></svg>
<svg class="abs" style="left:24px;top:236px;" width="11" height="6" viewBox="0 0 11 6"><path d="M1 1l4.5 4l4.5 -4" stroke="#555" stroke-width="1.3" fill="none"/></svg>
<svg class="abs" style="left:48px;top:231px;" width="6" height="18" viewBox="0 0 6 18"><circle cx="3" cy="3" r="1.4" fill="#444"/><circle cx="3" cy="8.5" r="1.4" fill="#444"/><circle cx="3" cy="14" r="1.4" fill="#444"/></svg>
<svg class="abs" style="left:70px;top:230px;" width="18" height="18" viewBox="0 0 18 18"><path d="M2 2l14 14M16 2L2 16" stroke="#b5b5b5" stroke-width="1.4"/></svg>
<svg class="abs" style="left:97px;top:230px;" width="22" height="18" viewBox="0 0 22 18"><path d="M2 10l6 6L20 3" stroke="#b5b5b5" stroke-width="1.4" fill="none"/></svg>
<div class="t" style="left:128px;top:227px;font-size:21px;color:#333;font-style:italic;font-family:'Liberation Serif'">fx</div>
<div class="abs" style="left:926px;top:192px;width:230px;height:373px;background:#fff;border:1px solid #a9a7ab;border-radius:4px;box-shadow:0 3px 8px rgba(0,0,0,0.18)"></div>
<div class="abs" style="left:928px;top:194px;width:226px;height:51px;background:#f1eff3"></div>
<svg class="abs" style="left:946px;top:207px;" width="32" height="29" viewBox="0 0 32 29"><rect x="0.5" y="0.5" width="28" height="23" fill="#fff"/><rect x="7" y="1" width="15" height="7.5" fill="#fbe6bd"/><rect x="7" y="8.5" width="15" height="7.5" fill="#f5c96a"/><rect x="1" y="8.5" width="6" height="7.5" fill="#fbe3b0"/><path d="M6.5 0.5v23M22.5 0.5v23" stroke="#777" stroke-width="1"/><path d="M0.5 8.2h28" stroke="#888" stroke-width="0.9"/><path d="M0.5 15.8h28" stroke="#888" stroke-width="0.9"/><rect x="0.5" y="0.5" width="28" height="23" fill="none" stroke="#666" stroke-width="1"/><rect x="13.5" y="13.5" width="17" height="14" fill="#fff" stroke="#666"/><path d="M25 17l-6 3 6 3M19 25.2h6" stroke="#555" stroke-width="1" fill="none"/></svg>
<div class="t" style="left:986px;top:217.3px;font-size:14px;color:#262626;font-weight:bold"><u>H</u>ighlight Cells Rules</div>
<svg class="abs" style="left:946px;top:257px;" width="32" height="29" viewBox="0 0 32 29"><rect x="0.5" y="0.5" width="28" height="23" fill="#fff"/><rect x="7" y="1" width="15" height="22" fill="#f7d68a"/><path d="M6.5 0.5v23M22.5 0.5v23" stroke="#777" stroke-width="1"/><path d="M0.5 8.2h28" stroke="#888" stroke-width="0.9"/><path d="M0.5 15.8h28" stroke="#888" stroke-width="0.9"/><rect x="0.5" y="0.5" width="28" height="23" fill="none" stroke="#666" stroke-width="1"/><path d="M14 14V4M11 7l3-3 3 3" stroke="#444" stroke-width="1.1" fill="none"/><rect x="13.5" y="13.5" width="17" height="14" fill="#fff" stroke="#666"/><text x="15.5" y="25" font-size="10" fill="#555" font-family="Liberation Sans">10</text></svg>
<div class="t" style="left:986px;top:267.7px;font-size:14px;color:#262626;font-weight:bold"><u>T</u>op/Bottom Rules</div>
<div class="abs" style="left:980px;top:297px;width:175px;height:1px;background:#dcdadd"></div>
<svg class="abs" style="left:946px;top:312px;" width="31" height="24" viewBox="0 0 31 24"><rect x="0.5" y="0.5" width="28" height="23" fill="#fff"/><rect x="7" y="1" width="8" height="22" fill="#5aa0e6"/><rect x="15" y="1" width="5" height="7.5" fill="#5aa0e6"/><path d="M6.5 0.5v23M22.5 0.5v23" stroke="#777" stroke-width="1"/><path d="M0.5 8.2h28" stroke="#888" stroke-width="0.9"/><path d="M0.5 15.8h28" stroke="#888" stroke-width="0.9"/><rect x="0.5" y="0.5" width="28" height="23" fill="none" stroke="#666" stroke-width="1"/></svg>
<div class="t" style="left:986px;top:322px;font-size:14px;color:#262626;font-weight:bold"><u>D</u>ata Bars</div>
<svg class="abs" style="left:946px;top:362px;" width="31" height="25" viewBox="0 0 31 25"><rect x="0.5" y="0.5" width="28" height="23" fill="#fff"/><rect x="7" y="1" width="15" height="7.5" fill="#7db8ef"/><rect x="7" y="8.5" width="15" height="7.5" fill="#f5c96a"/><rect x="7" y="16" width="15" height="7" fill="#f07088"/><path d="M6.5 0.5v23M22.5 0.5v23" stroke="#777" stroke-width="1"/><path d="M0.5 8.2h28" stroke="#888" stroke-width="0.9"/><path d="M0.5 15.8h28" stroke="#888" stroke-width="0.9"/><rect x="0.5" y="0.5" width="28" height="23" fill="none" stroke="#666" stroke-width="1"/></svg>
<div class="t" style="left:986px;top:372px;font-size:14px;color:#262626;font-weight:bold">Color <u>S</u>cales</div>
<svg class="abs" style="left:946px;top:413px;" width="31" height="25" viewBox="0 0 31 25"><rect x="0.5" y="0.5" width="28" height="23" fill="#fff"/><path d="M6.5 0.5v23M22.5 0.5v23" stroke="#777" stroke-width="1"/><path d="M0.5 8.2h28" stroke="#888" stroke-width="0.9"/><path d="M0.5 15.8h28" stroke="#888" stroke-width="0.9"/><rect x="0.5" y="0.5" width="28" height="23" fill="none" stroke="#666" stroke-width="1"/><circle cx="10" cy="4.5" r="1.3" fill="#3a8bc4"/><circle cx="10" cy="12" r="1.3" fill="#d03040"/><circle cx="10" cy="19.5" r="1.3" fill="#3a8bc4"/><path d="M14 4.5h5M14 12h5M14 19.5h5" stroke="#888" stroke-width="1"/></svg>
<div class="t" style="left:986px;top:422.7px;font-size:14px;color:#262626;font-weight:bold"><u>I</u>con Sets</div>
<svg class="abs" style="left:1137px;top:213px;" width="9" height="13" viewBox="0 0 9 13"><path d="M2 1l5 5.5L2 12" stroke="#444" stroke-width="1.2" fill="none"/></svg>
<svg class="abs" style="left:1137px;top:264px;" width="9" height="13" viewBox="0 0 9 13"><path d="M2 1l5 5.5L2 12" stroke="#444" stroke-width="1.2" fill="none"/></svg>
<svg class="abs" style="left:1137px;top:318px;" width="9" height="13" viewBox="0 0 9 13"><path d="M2 1l5 5.5L2 12" stroke="#444" stroke-width="1.2" fill="none"/></svg>
<svg class="abs" style="left:1137px;top:370px;" width="9" height="13" viewBox="0 0 9 13"><path d="M2 1l5 5.5L2 12" stroke="#444" stroke-width="1.2" fill="none"/></svg>
<svg class="abs" style="left:1137px;top:420px;" width="9" height="13" viewBox="0 0 9 13"><path d="M2 1l5 5.5L2 12" stroke="#444" stroke-width="1.2" fill="none"/></svg>
<svg class="abs" style="left:1137px;top:503px;" width="9" height="13" viewBox="0 0 9 13"><path d="M2 1l5 5.5L2 12" stroke="#444" stroke-width="1.2" fill="none"/></svg>
<div class="abs" style="left:928px;top:452px;width:227px;height:1px;background:#dcdadd"></div>
<svg class="abs" style="left:943px;top:464px;" width="18" height="16" viewBox="0 0 18 16"><rect x="0.5" y="0.5" width="16" height="14" fill="#fff"/><rect x="4.5" y="5" width="8" height="5" fill="#f5c96a"/><path d="M4.5 0.5v14M12.5 0.5v14" stroke="#777" stroke-width="1"/><path d="M0.5 5.2h16" stroke="#888" stroke-width="0.9"/><path d="M0.5 9.8h16" stroke="#888" stroke-width="0.9"/><rect x="0.5" y="0.5" width="16" height="14" fill="none" stroke="#666" stroke-width="1"/></svg>
<div class="t" style="left:971px;top:466px;font-size:14px;color:#444;"><u>N</u>ew Rule...</div>
<svg class="abs" style="left:943px;top:500px;" width="18" height="16" viewBox="0 0 18 16"><rect x="0.5" y="0.5" width="16" height="14" fill="#fff"/><path d="M4.5 0.5v14M12.5 0.5v14" stroke="#777" stroke-width="1"/><path d="M0.5 5.2h16" stroke="#888" stroke-width="0.9"/><path d="M0.5 9.8h16" stroke="#888" stroke-width="0.9"/><rect x="0.5" y="0.5" width="16" height="14" fill="none" stroke="#666" stroke-width="1"/></svg>
<svg class="abs" style="left:943px;top:533px;" width="18" height="16" viewBox="0 0 18 16"><rect x="0.5" y="0.5" width="16" height="14" fill="#fff"/><path d="M4.5 0.5v14M12.5 0.5v14" stroke="#777" stroke-width="1"/><path d="M0.5 5.2h16" stroke="#888" stroke-width="0.9"/><path d="M0.5 9.8h16" stroke="#888" stroke-width="0.9"/><rect x="0.5" y="0.5" width="16" height="14" fill="none" stroke="#666" stroke-width="1"/></svg>
<div class="t" style="left:971px;top:540px;font-size:14px;color:#444;">Manage <u>R</u>ules...</div>
<div class="abs" style="left:1155.5px;top:194.5px;width:228px;height:398px;background:#fff;border:1px solid #a9a7ab;border-radius:4px;box-shadow:0 3px 8px rgba(0,0,0,0.18)"></div>
<div class="abs" style="left:1158px;top:500.5px;width:223px;height:51px;background:#f4f3f6"></div>
<div class="abs" style="left:1158px;top:552px;width:223px;height:1px;background:#dcdadd"></div>
<svg class="abs" style="left:1176px;top:210px;" width="33" height="29" viewBox="0 0 33 29"><rect x="0.5" y="0.5" width="28" height="23" fill="#fff"/><rect x="7" y="1" width="15" height="15" fill="#fbe3b0"/><rect x="7" y="8" width="15" height="8" fill="#f5c96a"/><path d="M6.5 0.5v23M22.5 0.5v23" stroke="#777" stroke-width="1"/><path d="M0.5 8.2h28" stroke="#888" stroke-width="0.9"/><path d="M0.5 15.8h28" stroke="#888" stroke-width="0.9"/><rect x="0.5" y="0.5" width="28" height="23" fill="none" stroke="#666" stroke-width="1"/><rect x="13.5" y="13.5" width="17" height="14" fill="#fff" stroke="#666"/><path d="M19 16.5l7 4-7 4" stroke="#555" stroke-width="1.1" fill="none"/></svg>
<svg class="abs" style="left:1176px;top:260px;" width="33" height="29" viewBox="0 0 33 29"><rect x="0.5" y="0.5" width="28" height="23" fill="#fff"/><rect x="7" y="1" width="15" height="15" fill="#fbe3b0"/><rect x="7" y="8" width="15" height="8" fill="#f5c96a"/><path d="M6.5 0.5v23M22.5 0.5v23" stroke="#777" stroke-width="1"/><path d="M0.5 8.2h28" stroke="#888" stroke-width="0.9"/><path d="M0.5 15.8h28" stroke="#888" stroke-width="0.9"/><rect x="0.5" y="0.5" width="28" height="23" fill="none" stroke="#666" stroke-width="1"/><rect x="13.5" y="13.5" width="17" height="14" fill="#fff" stroke="#666"/><path d="M26 16.5l-7 4 7 4" stroke="#555" stroke-width="1.1" fill="none"/></svg>
<svg class="abs" style="left:1176px;top:311px;" width="31" height="25" viewBox="0 0 31 25"><rect x="0.5" y="0.5" width="28" height="23" fill="#fff"/><rect x="7" y="8.5" width="15" height="7.5" fill="#f5c96a"/><rect x="1" y="1" width="6" height="7.5" fill="#5aa0e6"/><rect x="22" y="1" width="6" height="7.5" fill="#5aa0e6"/><path d="M6.5 0.5v23M22.5 0.5v23" stroke="#777" stroke-width="1"/><path d="M0.5 8.2h28" stroke="#888" stroke-width="0.9"/><path d="M0.5 15.8h28" stroke="#888" stroke-width="0.9"/><rect x="0.5" y="0.5" width="28" height="23" fill="none" stroke="#666" stroke-width="1"/></svg>
<svg class="abs" style="left:1176px;top:361px;" width="33" height="29" viewBox="0 0 33 29"><rect x="0.5" y="0.5" width="28" height="23" fill="#fff"/><rect x="7" y="1" width="15" height="15" fill="#fbe3b0"/><rect x="7" y="8" width="15" height="8" fill="#f5c96a"/><path d="M6.5 0.5v23M22.5 0.5v23" stroke="#777" stroke-width="1"/><path d="M0.5 8.2h28" stroke="#888" stroke-width="0.9"/><path d="M0.5 15.8h28" stroke="#888" stroke-width="0.9"/><rect x="0.5" y="0.5" width="28" height="23" fill="none" stroke="#666" stroke-width="1"/><rect x="13.5" y="13.5" width="17" height="14" fill="#fff" stroke="#666"/><path d="M18 18.5h9M18 22.5h9" stroke="#555" stroke-width="1.1"/></svg>
<svg class="abs" style="left:1176px;top:412px;" width="33" height="29" viewBox="0 0 33 29"><rect x="0.5" y="0.5" width="28" height="23" fill="#fff"/><rect x="7" y="1" width="15" height="15" fill="#fbe3b0"/><rect x="7" y="8" width="15" height="8" fill="#f5c96a"/><path d="M6.5 0.5v23M22.5 0.5v23" stroke="#777" stroke-width="1"/><path d="M0.5 8.2h28" stroke="#888" stroke-width="0.9"/><path d="M0.5 15.8h28" stroke="#888" stroke-width="0.9"/><rect x="0.5" y="0.5" width="28" height="23" fill="none" stroke="#666" stroke-width="1"/><rect x="13.5" y="13.5" width="17" height="14" fill="#fff" stroke="#666"/><text x="17.5" y="25" font-size="12" fill="#555" font-family="Liberation Sans">a</text></svg>
<svg class="abs" style="left:1176px;top:462px;" width="33" height="29" viewBox="0 0 33 29"><rect x="0.5" y="0.5" width="28" height="23" fill="#fff"/><rect x="7" y="1" width="15" height="15" fill="#fbe3b0"/><rect x="7" y="8" width="15" height="8" fill="#f5c96a"/><path d="M6.5 0.5v23M22.5 0.5v23" stroke="#777" stroke-width="1"/><path d="M0.5 8.2h28" stroke="#888" stroke-width="0.9"/><path d="M0.5 15.8h28" stroke="#888" stroke-width="0.9"/><rect x="0.5" y="0.5" width="28" height="23" fill="none" stroke="#666" stroke-width="1"/><rect x="15.5" y="13.5" width="15" height="14" fill="#fff" stroke="#666"/><path d="M15.5 17.5h15" stroke="#666"/></svg>
<svg class="abs" style="left:1176px;top:512px;" width="31" height="26" viewBox="0 0 31 26"><rect x="0.5" y="0.5" width="28" height="24" fill="#fff"/><rect x="7" y="1" width="15" height="8" fill="#f5c96a"/><rect x="7" y="16.5" width="15" height="8" fill="#f5c96a"/><path d="M6.5 0.5v24M22.5 0.5v24" stroke="#777" stroke-width="1"/><path d="M0.5 8.5h28" stroke="#888" stroke-width="0.9"/><path d="M0.5 16.5h28" stroke="#888" stroke-width="0.9"/><rect x="0.5" y="0.5" width="28" height="24" fill="none" stroke="#666" stroke-width="1"/></svg>
<div class="t" style="left:1216px;top:216.6px;font-size:14px;color:#262626;font-weight:bold"><u>G</u>reater Than...</div>
<div class="t" style="left:1216px;top:266.8px;font-size:14px;color:#262626;font-weight:bold"><u>L</u>ess Than...</div>
<div class="t" style="left:1216px;top:317.2px;font-size:14px;color:#262626;font-weight:bold"><u>B</u>etween...</div>
<div class="t" style="left:1216px;top:367.6px;font-size:14px;color:#262626;font-weight:bold"><u>E</u>qual To...</div>
<div class="t" style="left:1216px;top:418.2px;font-size:14px;color:#262626;font-weight:bold"><u>T</u>ext that Contains...</div>
<div class="t" style="left:1216px;top:468.5px;font-size:14px;color:#262626;font-weight:bold"><u>A</u> Date Occurring...</div>
<div class="t" style="left:1216px;top:519px;font-size:14px;color:#262626;font-weight:bold"><u>D</u>uplicate Values...</div>
<div class="t" style="left:1201px;top:566px;font-size:14px;color:#444;"><u>M</u>ore Rules...</div>
<svg class="abs" style="left:930px;top:476px;" width="226" height="98" viewBox="0 0 226 98"><path d="M8 29.5H147.5V3.5L221.5 48.5L147.5 94V70H8z" fill="#2350b4"/></svg>
<svg class="abs" style="left:1290px;top:516px;" width="26" height="32" viewBox="0 0 26 32"><path d="M2.5 2.5v22l5.3-5.2 4.2 9.2 3.6-1.6-4.1-8.9h7.4z" fill="#fff" stroke="#1a1a1a" stroke-width="1.7" stroke-linejoin="round"/></svg>
</body></html>
